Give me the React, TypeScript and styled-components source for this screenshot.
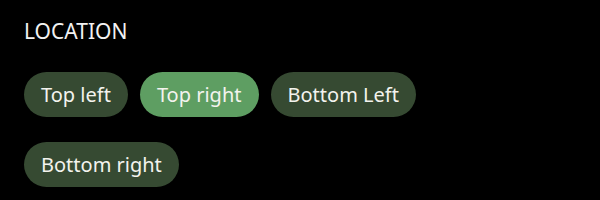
import React, { useState } from "react";
import styled, { createGlobalStyle } from "styled-components";

const Global = createGlobalStyle`
  html, body { margin: 0; padding: 0; background: #000; }
  body { font-family: "Noto Sans", "Open Sans", sans-serif; }
`;

const Page = styled.div`
  width: 600px;
  height: 200px;
  background: #000;
  box-sizing: border-box;
  padding: 17px 24px 0 24px;
`;

const Title = styled.div`
  color: #f2f2f2;
  font-size: 21px;
  line-height: 28px;
  letter-spacing: 0;
`;

const Chips = styled.div`
  display: flex;
  flex-wrap: wrap;
  column-gap: 12px;
  row-gap: 25px;
  margin-top: 27px;
  width: 420px;
`;

const Chip = styled.button<{ $active?: boolean }>`
  height: 45px;
  border: none;
  border-radius: 23px;
  padding: 0 17px;
  background: ${(p) => (p.$active ? "#5e9e62" : "#364a32")};
  color: #f3f3ee;
  font-family: "Noto Sans", "Open Sans", sans-serif;
  font-size: 20px;
  line-height: 45px;
  cursor: pointer;
`;

const options = ["Top left", "Top right", "Bottom Left", "Bottom right"];

export default function App() {
  const [sel, setSel] = useState("Top right");
  return (
    <Page>
      <Global />
      <Title>LOCATION</Title>
      <Chips>
        {options.map((o) => (
          <Chip key={o} $active={o === sel} onClick={() => setSel(o)}>
            {o}
          </Chip>
        ))}
      </Chips>
    </Page>
  );
}
